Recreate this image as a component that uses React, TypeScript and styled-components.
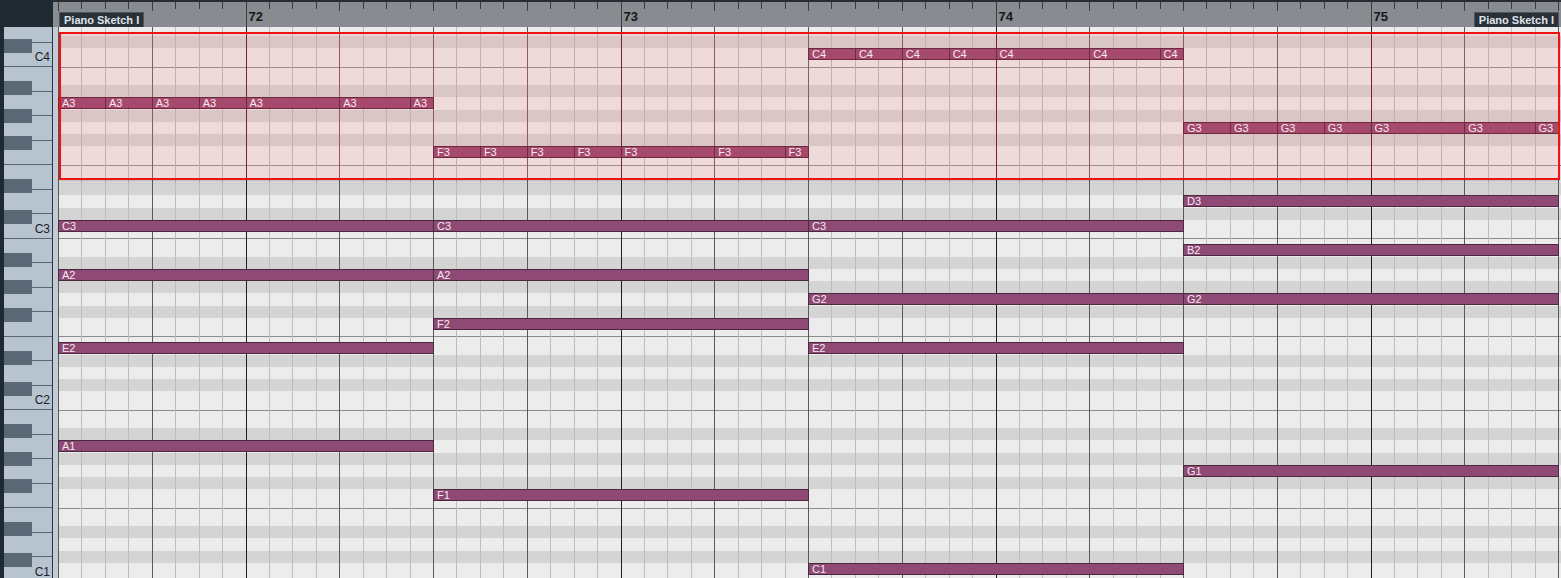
import React from "react";
import styled, { createGlobalStyle, css } from "styled-components";

const SIXTEENTH = 375 / 16;
const STEPS = 64;
const LANE_H = 12.25;
const LANE_COUNT = 47;
const KEY_H = 24.5;

type LaneKind = "white" | "black" | "gap";
type LineKind = "bar" | "beat" | "step";
type Tone = "plain" | "pink";

const LANE_NAMES = ["D", "C#", "C", "gap", "B", "A#", "A", "G#", "G", "F#", "F", "gap", "E", "D#"];
const KEY_NAMES = ["D", "C", "B", "A", "G", "F", "E"];
const BLACK_TOP: Record<string, number> = { B: 14, A: 17, G: 20, E: 14, D: 20.5 };

// lane 0 is D4, counting downwards
const laneOf = (pitch: string) => {
  const name = pitch.slice(0, -1);
  const oct = Number(pitch.slice(-1));
  const idx = LANE_NAMES.indexOf(name);
  return idx <= 2 ? idx + (4 - oct) * 14 : idx + (3 - oct) * 14;
};

// step 0 is beat 3 of bar 71, the left edge of the grid
const lineKind = (n: number): LineKind =>
  n % 16 === 8 ? "bar" : n % 4 === 0 ? "beat" : "step";

const GlobalStyle = createGlobalStyle`
  html, body {
    margin: 0;
    padding: 0;
    background: #1e2931;
    overflow: hidden;
  }
  body {
    font-family: "Liberation Sans", Arial, sans-serif;
  }
`;

const Editor = styled.div`
  width: 1561px;
  height: 578px;
  display: grid;
  grid-template-columns: 53px 5px 1fr;
  grid-template-rows: 27px 551px;
  overflow: hidden;
`;

const Corner = styled.div`
  background: #1e2931;
`;

/* ---------- ruler ---------- */

const Ruler = styled.div`
  grid-column: 2 / 4;
  position: relative;
  overflow: hidden;
  background: #888b90;
  border-top: 2px solid #2a2e33;
`;

const TickRow = styled.div`
  display: flex;
  height: 100%;
  padding-left: 5px;
`;

const TickCell = styled.div<{ $kind: LineKind }>`
  flex: none;
  width: ${SIXTEENTH}px;
  position: relative;
  box-sizing: border-box;
  padding: 7px 0 0 3px;
  font-size: 13px;
  font-weight: bold;
  line-height: 15px;
  color: #15181b;
  white-space: nowrap;

  &::before {
    content: "";
    position: absolute;
    left: 0;
    top: 0;
    width: 1px;
    background: #3a3e43;
    height: ${(p) => (p.$kind === "bar" ? "100%" : p.$kind === "beat" ? "9px" : "7px")};
  }
`;

const PartLabel = styled.div<{ $side: "left" | "right" }>`
  position: absolute;
  top: 10px;
  height: 15px;
  box-sizing: border-box;
  padding: 0 4px;
  background: #2b3139;
  border: 1px solid #4e5761;
  border-bottom: none;
  color: #dfe4ea;
  font-size: 11px;
  font-weight: bold;
  line-height: 14px;
  white-space: nowrap;
  ${(p) => (p.$side === "left" ? css`left: 6px;` : css`right: 2px;`)}
`;

/* ---------- keyboard ---------- */

const Keyboard = styled.div`
  overflow: hidden;
  background: #b7c3ce;
  border-left: 4px solid #1e2931;
  border-right: 1px solid #2b3742;
`;

const KeyStack = styled.div`
  display: flex;
  flex-direction: column;
  margin-top: -8.85px;
`;

const WhiteKey = styled.div`
  flex: none;
  height: ${KEY_H}px;
  box-sizing: border-box;
  position: relative;
  border-bottom: 1px solid #5a6675;
  display: flex;
  align-items: flex-end;
  justify-content: flex-end;
  padding: 0 2px 3px 0;
`;

const BlackKey = styled.span<{ $top: number }>`
  position: absolute;
  left: 0;
  top: ${(p) => p.$top}px;
  width: 28px;
  height: 14px;
  background: #5b6876;
  z-index: 1;
`;

const KeyLabel = styled.span`
  font-size: 12px;
  line-height: 12px;
  color: #17212b;
`;

const Gutter = styled.div`
  background: #c3cbd4;
`;

/* ---------- note grid ---------- */

const Grid = styled.div`
  position: relative;
  overflow: hidden;
  background: #ececec;
`;

const LaneStack = styled.div`
  display: flex;
  flex-direction: column;
  margin-top: -3.1px;
`;

const Lane = styled.div<{ $kind: LaneKind }>`
  flex: none;
  height: ${LANE_H}px;
  position: relative;
  background: ${(p) => (p.$kind === "black" ? "#d4d4d4" : "#ececec")};
  ${(p) =>
    p.$kind === "gap" &&
    css`
      &::after {
        content: "";
        position: absolute;
        left: 0;
        right: 0;
        top: 50%;
        height: 1px;
        background: #8c8c8c;
      }
    `}
`;

const lineColors: Record<Tone, Record<LineKind, string>> = {
  plain: { bar: "#1e1e1e", beat: "#5a5a5a", step: "#bdbdbd" },
  pink: { bar: "#7a2228", beat: "#8d5a60", step: "#c9acaf" },
};

const ColumnRow = styled.div<{ $shift: number }>`
  position: absolute;
  top: 0;
  bottom: 0;
  left: ${(p) => p.$shift}px;
  display: flex;
  pointer-events: none;
`;

const Column = styled.div<{ $kind: LineKind; $tone: Tone }>`
  flex: none;
  width: ${SIXTEENTH}px;
  border-left: 1px solid ${(p) => lineColors[p.$tone][p.$kind]};
  box-sizing: border-box;
`;

const Selection = styled.div<{ $frame?: boolean }>`
  position: absolute;
  left: 1px;
  top: 5px;
  width: 1501px;
  height: 148px;
  box-sizing: border-box;
  pointer-events: none;
  ${(p) =>
    p.$frame
      ? css`
          border: 2px solid #f01212;
        `
      : css`
          overflow: hidden;
          background: rgba(255, 140, 140, 0.18);
          box-shadow: 0 2px 3px rgba(0, 0, 0, 0.2), inset 2px 2px 3px rgba(0, 0, 0, 0.08);
        `}
`;

const NoteLayer = styled.div`
  position: absolute;
  left: 0;
  top: -3.1px;
  display: grid;
  grid-template-columns: repeat(${STEPS}, ${SIXTEENTH}px);
  grid-template-rows: repeat(${LANE_COUNT}, ${LANE_H}px);
`;

const Note = styled.div<{ $selected: boolean }>`
  height: 12px;
  margin-right: -1px;
  box-sizing: border-box;
  padding-left: 3px;
  font-size: 11px;
  line-height: 10px;
  color: #f5e8f0;
  white-space: nowrap;
  overflow: hidden;
  background: ${(p) => (p.$selected ? "#a64a6d" : "#8e4a74")};
  border: 1px solid ${(p) => (p.$selected ? "#6e2840" : "#4a2a3e")};
`;

type NoteData = { pitch: string; from: number; to: number; selected: boolean };

// the repeated figure in the selected part: 8th, 8th, 8th, 8th, quarter, dotted 8th, 16th
const FIGURE = [0, 2, 4, 6, 8, 12, 15, 16];

const figure = (pitch: string, start: number): NoteData[] =>
  FIGURE.slice(0, -1).map((o, i) => ({
    pitch,
    from: start + o,
    to: start + FIGURE[i + 1],
    selected: true,
  }));

const held = (pitch: string, ...starts: number[]): NoteData[] =>
  starts.map((s) => ({ pitch, from: s, to: s + 16, selected: false }));

const NOTES: NoteData[] = [
  ...held("C3", 0, 16, 32),
  ...held("A2", 0, 16),
  ...held("G2", 32, 48),
  ...held("F2", 16),
  ...held("E2", 0, 32),
  ...held("D3", 48),
  ...held("B2", 48),
  ...held("A1", 0),
  ...held("G1", 48),
  ...held("F1", 16),
  ...held("C1", 32),
  ...figure("A3", 0),
  ...figure("F3", 16),
  ...figure("C4", 32),
  ...figure("G3", 48),
];

const Columns = ({ tone, shift }: { tone: Tone; shift: number }) => (
  <ColumnRow $shift={shift}>
    {Array.from({ length: STEPS + 1 }, (_, n) => (
      <Column key={n} $kind={lineKind(n)} $tone={tone} />
    ))}
  </ColumnRow>
);

const lanes: LaneKind[] = Array.from({ length: LANE_COUNT }, (_, k) => {
  const name = LANE_NAMES[k % 14];
  return name === "gap" ? "gap" : name.includes("#") ? "black" : "white";
});

const keys = Array.from({ length: 24 }, (_, i) => ({
  name: KEY_NAMES[i % 7],
  oct: (i % 7 <= 1 ? 4 : 3) - Math.floor(i / 7),
}));

const BAR_AT: Record<number, number> = { 8: 72, 24: 73, 40: 74, 56: 75 };

export default function App() {
  return (
    <>
      <GlobalStyle />
      <Editor>
        <Corner />
        <Ruler>
          <TickRow>
            {Array.from({ length: STEPS + 1 }, (_, n) => (
              <TickCell key={n} $kind={lineKind(n)}>
                {BAR_AT[n]}
              </TickCell>
            ))}
          </TickRow>
          <PartLabel $side="left">Piano Sketch I</PartLabel>
          <PartLabel $side="right">Piano Sketch I</PartLabel>
        </Ruler>

        <Keyboard>
          <KeyStack>
            {keys.map(({ name, oct }, i) => (
              <WhiteKey key={i}>
                {BLACK_TOP[name] !== undefined && <BlackKey $top={BLACK_TOP[name]} />}
                {name === "C" && <KeyLabel>C{oct}</KeyLabel>}
              </WhiteKey>
            ))}
          </KeyStack>
        </Keyboard>
        <Gutter />

        <Grid>
          <LaneStack>
            {lanes.map((kind, k) => (
              <Lane key={k} $kind={kind} />
            ))}
          </LaneStack>
          <Columns tone="plain" shift={0} />
          <Selection>
            <Columns tone="pink" shift={-1} />
          </Selection>
          <NoteLayer>
            {NOTES.map((n, i) => (
              <Note
                key={i}
                $selected={n.selected}
                style={{
                  gridRow: laneOf(n.pitch) + 1,
                  gridColumn: `${n.from + 1} / ${n.to + 1}`,
                }}
              >
                {n.pitch}
              </Note>
            ))}
          </NoteLayer>
          <Selection $frame />
        </Grid>
      </Editor>
    </>
  );
}
